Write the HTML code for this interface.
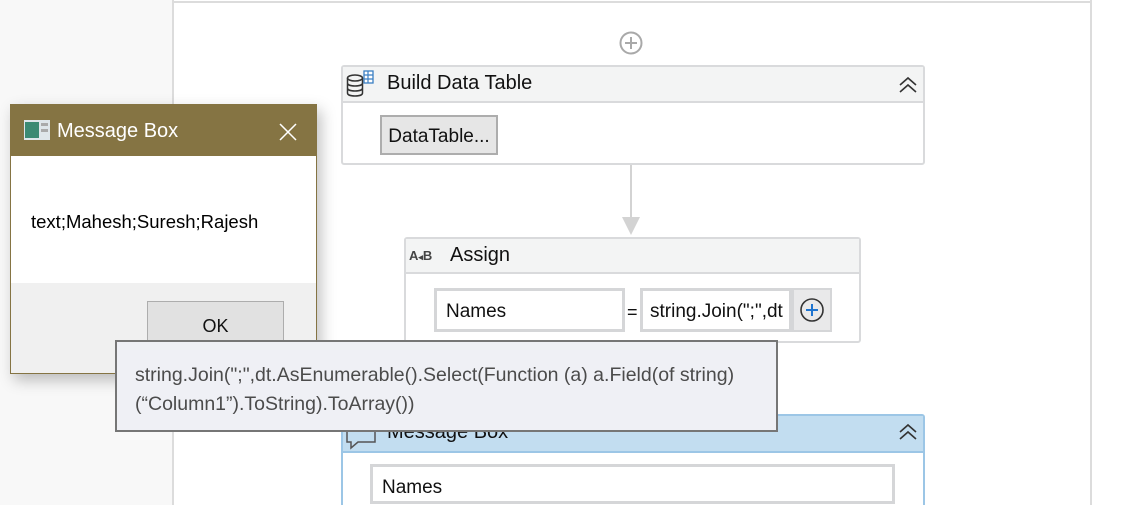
<!DOCTYPE html>
<html><head><style>
*{margin:0;padding:0;box-sizing:border-box}
html,body{width:1139px;height:505px;overflow:hidden}
body{background:#fff;font-family:"Liberation Sans",sans-serif;position:relative;color:#111}
.a{position:absolute}
.card{position:absolute;border:2px solid #d9dadc;border-radius:3px;background:#fff}
.hdr{position:absolute;left:0;right:0;top:0;background:#f3f4f4;border-bottom:2px solid #d9dadc}
.fld{position:absolute;border:3px solid #d5d6d8;background:#fff;font-size:19px;padding-left:9px;line-height:34px;overflow:hidden;white-space:nowrap}
</style></head><body>
<div class="a" style="left:0;top:0;width:172px;height:505px;background:#f8f8f8"></div>
<div class="a" style="left:172px;top:0;width:2px;height:505px;background:#dcdcdc"></div>
<div class="a" style="left:1090px;top:0;width:2px;height:505px;background:#dcdcdc"></div>
<div class="a" style="left:172px;top:1px;width:920px;height:2px;background:#dcdcdc"></div>

<svg class="a" style="left:619px;top:31px" width="24" height="24"><circle cx="12" cy="12" r="10.5" fill="none" stroke="#a9a9a9" stroke-width="2"/><path d="M12 6v12M6 12h12" stroke="#a9a9a9" stroke-width="2"/></svg>

<div class="card" style="left:341px;top:65px;width:584px;height:100px">
 <div class="hdr" style="height:36px"></div>
 <svg class="a" style="left:2px;top:2px" width="32" height="30"><g fill="none" stroke="#333" stroke-width="1.5"><ellipse cx="10" cy="9" rx="7.5" ry="3"/><path d="M2.5 9v15c0 2 3.4 3 7.5 3s7.5-1 7.5-3V9M2.5 14c0 2 3.4 3 7.5 3s7.5-1 7.5-3M2.5 19c0 2 3.4 3 7.5 3s7.5-1 7.5-3"/></g><rect x="19" y="2" width="9" height="12" fill="#fff" stroke="#3b7fc4" stroke-width="1.3"/><path d="M19 6h9M19 10h9M23 2v12" stroke="#3b7fc4" stroke-width="1.2"/></svg>
 <div class="a" style="left:44px;top:5px;font-size:20px">Build Data Table</div>
 <svg class="a" style="left:554px;top:8px" width="22" height="20"><path d="M3 10l8-7 8 7M3 17l8-7 8 7" fill="none" stroke="#333" stroke-width="1.6"/></svg>
 <div class="a" style="left:37px;top:48px;width:118px;height:40px;background:#e6e6e6;border:2px solid #adadad;font-size:19px;line-height:40px;text-align:center">DataTable...</div>
</div>

<div class="a" style="left:630px;top:165px;width:2px;height:58px;background:#d3d3d3"></div>
<svg class="a" style="left:622px;top:217px" width="18" height="20"><path d="M0 0h18L9 18z" fill="#d3d3d3"/></svg>

<div class="card" style="left:404px;top:237px;width:457px;height:106px">
 <div class="hdr" style="height:35px"></div>
 <div class="a" style="left:3px;top:9px;font-size:13px;font-weight:bold;color:#444">A<span style="font-size:9px">◂</span>B</div>
 <div class="a" style="left:44px;top:5px;font-size:20px">Assign</div>
 <div class="fld" style="left:28px;top:49px;width:191px;height:44px;line-height:42px">Names</div>
 <div class="a" style="left:221px;top:63px;font-size:18px">=</div>
 <div class="fld" style="left:234px;top:49px;width:152px;height:44px;line-height:42px;padding-left:7px">string.Join(";",dt</div>
 <div class="a" style="left:386px;top:49px;width:40px;height:44px;background:#e9e9ea;border:2px solid #d5d6d8"></div>
 <svg class="a" style="left:393px;top:58px" width="26" height="26"><circle cx="13" cy="13" r="11" fill="none" stroke="#333" stroke-width="1.6"/><path d="M13 7v12M7 13h12" stroke="#1e74d0" stroke-width="2"/></svg>
</div>

<div class="card" style="left:341px;top:414px;width:584px;height:100px;border-color:#9cc6e6">
 <div class="hdr" style="height:37px;background:#c2ddf0;border-color:#9cc6e6"></div>
 <svg class="a" style="left:2px;top:10px" width="34" height="24"><path d="M2 2h28v14H13l-7 6v-6H2z" fill="none" stroke="#555" stroke-width="1.5"/></svg>
 <div class="a" style="left:44px;top:5px;font-size:20px">Message Box</div>
 <svg class="a" style="left:554px;top:6px" width="22" height="20"><path d="M3 10l8-7 8 7M3 17l8-7 8 7" fill="none" stroke="#333" stroke-width="1.6"/></svg>
 <div class="fld" style="left:27px;top:48px;width:525px;height:40px;line-height:42px">Names</div>
</div>

<div class="a" style="left:10px;top:104px;width:307px;height:270px;border:1px solid #857443;background:#f0f0f0;box-shadow:4px 6px 14px rgba(0,0,0,.25)">
 <div class="a" style="left:0;top:0;right:0;height:51px;background:#857443"></div>
 <svg class="a" style="left:13px;top:15px" width="28" height="22"><rect x="0" y="0" width="26" height="20" fill="#dfe6ea"/><rect x="1" y="2" width="14" height="16" fill="#3c8a73"/><rect x="17" y="3" width="7" height="3" fill="#aaa"/><rect x="17" y="9" width="7" height="3" fill="#aaa"/></svg>
 <div class="a" style="left:46px;top:15px;font-size:20px;color:#fff">Message Box</div>
 <svg class="a" style="left:268px;top:18px" width="18" height="18"><path d="M1 1l16 16M17 1L1 17" stroke="#fff" stroke-width="1.5"/></svg>
 <div class="a" style="left:0;top:51px;right:0;height:127px;background:#fff"></div>
 <div class="a" style="left:20px;top:106px;font-size:18.5px;color:#000">text;Mahesh;Suresh;Rajesh</div>
 <div class="a" style="left:136px;top:196px;width:137px;height:50px;background:#e1e1e1;border:1px solid #adadad;font-size:18px;text-align:center;line-height:48px">OK</div>
</div>

<div class="a" style="left:115px;top:340px;width:663px;height:92px;background:#eff0f5;border:2px solid #767676;font-size:19.5px;color:#4b4b4b;padding:19px 0 0 18px;line-height:29px;white-space:nowrap">string.Join(";",dt.AsEnumerable().Select(Function (a) a.Field(of string)<br>(“Column1”).ToString).ToArray())</div>
</body></html>
